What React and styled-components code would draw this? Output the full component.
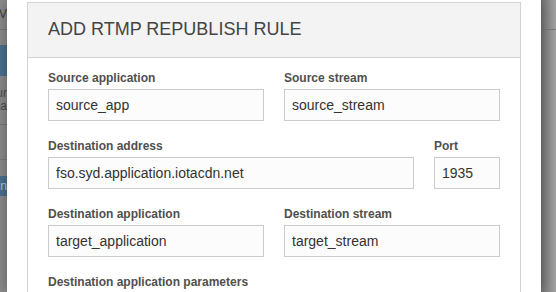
import React from 'react';
import styled, { createGlobalStyle } from 'styled-components';

const GlobalStyle = createGlobalStyle`
  html, body {
    margin: 0;
    padding: 0;
    background: #8c8c8c;
    font-family: "Liberation Sans", Arial, sans-serif;
  }
`;

// page behind the dimmed overlay
const Screen = styled.div`
  display: flex;
  width: 556px;
  height: 292px;
  overflow: hidden;
  background: #8c8c8c;
`;

const PagePeek = styled.div`
  flex: 0 0 ${props => props.width}px;
  display: flex;
  flex-direction: column;
  align-items: flex-end;
  overflow: hidden;
  background: ${props => props.shade};
`;

const PeekRow = styled.div`
  flex: 0 0 ${props => props.height}px;
  width: 100%;
  display: flex;
  justify-content: flex-end;
  align-items: center;
  overflow: hidden;
  white-space: nowrap;
  font-size: 12px;
  line-height: 13px;
  color: ${props => props.color || '#4d4d4d'};
  background: ${props => props.bg || 'transparent'};
  border-bottom: ${props => props.line ? '1px solid #7a7a7a' : 'none'};
`;

const PeekText = styled.span`
  display: block;
  text-align: right;
`;

const ModalShell = styled.div`
  flex: 0 0 534px;
  box-sizing: border-box;
  padding: 2px 20px 0;
  background: #fff;
  box-shadow: 0 0 14px rgba(0, 0, 0, 0.35);
  position: relative;
  z-index: 1;
`;

const Panel = styled.div`
  border: 1px solid #d2d2d2;
  border-bottom: none;
  height: 100%;
  background: #fff;
`;

const Header = styled.div`
  padding: 16px 20px 18px;
  background: #f3f3f3;
  border-bottom: 1px solid #d2d2d2;
`;

const Title = styled.h3`
  margin: 0;
  font-size: 18px;
  line-height: 20px;
  font-weight: 400;
  color: #444;
`;

const Body = styled.div`
  padding: 11px 20px 0;
`;

const Row = styled.div`
  display: grid;
  grid-template-columns: ${props => props.cols};
  column-gap: 20px;
  margin-bottom: 16px;
`;

const Field = styled.div`
  display: flex;
  flex-direction: column;
`;

const Label = styled.label`
  display: block;
  padding-top: 1px;
  font-size: 12px;
  line-height: 17px;
  font-weight: 700;
  color: #4f4f4f;
  margin-bottom: 2px;
`;

const Input = styled.input`
  box-sizing: border-box;
  width: 100%;
  height: 32px;
  padding: 0 7px;
  border: 1px solid #cbcbcb;
  border-radius: 0;
  background: #fcfcfc;
  font-family: "Liberation Sans", Arial, sans-serif;
  font-size: 14px;
  color: #333;
  outline: none;
`;

const fields = [
  {
    cols: '1fr 1fr',
    items: [
      { label: 'Source application', value: 'source_app' },
      { label: 'Source stream', value: 'source_stream' },
    ],
  },
  {
    cols: '366px 66px',
    items: [
      { label: 'Destination address', value: 'fso.syd.application.iotacdn.net' },
      { label: 'Port', value: '1935' },
    ],
  },
  {
    cols: '1fr 1fr',
    items: [
      { label: 'Destination application', value: 'target_application' },
      { label: 'Destination stream', value: 'target_stream' },
    ],
  },
  {
    cols: '1fr',
    items: [{ label: 'Destination application parameters', value: '' }],
  },
];

export default function App() {
  return (
    <>
      <GlobalStyle />
      <Screen>
        <PagePeek width={7} shade="#8c8c8c">
          <PeekRow height={29} line color="#3f3f3f"><PeekText>V</PeekText></PeekRow>
          <PeekRow height={15} />
          <PeekRow height={31} bg="#4b7190" />
          <PeekRow height={11} />
          <PeekRow height={26}>
            <PeekText>Your<br />Area</PeekText>
          </PeekRow>
          <PeekRow height={11} line />
          <PeekRow height={34} line />
          <PeekRow height={16} />
          <PeekRow height={20} bg="#4b7190" color="#b9c6d1"><PeekText>in</PeekText></PeekRow>
          <PeekRow height={99} />
        </PagePeek>

        <ModalShell>
          <Panel>
            <Header>
              <Title>ADD RTMP REPUBLISH RULE</Title>
            </Header>
            <Body>
              {fields.map((row, i) => (
                <Row key={i} cols={row.cols}>
                  {row.items.map(item => (
                    <Field key={item.label}>
                      <Label>{item.label}</Label>
                      <Input defaultValue={item.value} readOnly />
                    </Field>
                  ))}
                </Row>
              ))}
            </Body>
          </Panel>
        </ModalShell>

        <PagePeek width={15} shade="linear-gradient(to right, #767676, #a2a2a2)">
          <PeekRow height={29} line />
        </PagePeek>
      </Screen>
    </>
  );
}
